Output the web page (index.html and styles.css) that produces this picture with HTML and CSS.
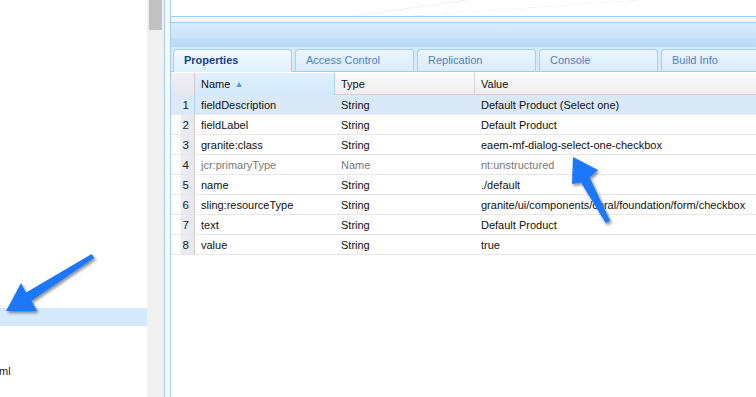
FILE: index.html
```html
<!DOCTYPE html>
<html>
<head>
<meta charset="utf-8">
<link rel="stylesheet" href="styles.css">
</head>
<body>
<div class="left">
  <div class="tree">
    <div class="tree-row selected"></div>
    <div class="tree-gap"></div>
    <div class="tree-row text">ml</div>
  </div>
</div>
<div class="scrollbar"><div class="thumb"></div></div>
<div class="splitter"></div>
<div class="main">
  <div class="topbox"></div>
  <div class="topgap"></div>
  <div class="panel-header"><div class="ph-top"></div><div class="ph-bottom"></div></div>
  <div class="tabstrip">
    <div class="tab active">Properties</div>
    <div class="tab">Access Control</div>
    <div class="tab">Replication</div>
    <div class="tab">Console</div>
    <div class="tab">Build Info</div>
  </div>
  <div class="grid">
    <div class="ghead">
      <div class="gh num"></div>
      <div class="gh name">Name <span class="sort">&#9650;</span></div>
      <div class="gh">Type</div>
      <div class="gh value">Value</div>
    </div>
    <div class="row sel"><div class="c num">1</div><div class="c">fieldDescription</div><div class="c">String</div><div class="c">Default Product (Select one)</div></div>
    <div class="row"><div class="c num">2</div><div class="c">fieldLabel</div><div class="c">String</div><div class="c">Default Product</div></div>
    <div class="row"><div class="c num">3</div><div class="c">granite:class</div><div class="c">String</div><div class="c">eaem-mf-dialog-select-one-checkbox</div></div>
    <div class="row dim"><div class="c num">4</div><div class="c">jcr:primaryType</div><div class="c">Name</div><div class="c">nt:unstructured</div></div>
    <div class="row"><div class="c num">5</div><div class="c">name</div><div class="c">String</div><div class="c">./default</div></div>
    <div class="row"><div class="c num">6</div><div class="c">sling:resourceType</div><div class="c">String</div><div class="c">granite/ui/components/coral/foundation/form/checkbox</div></div>
    <div class="row"><div class="c num">7</div><div class="c">text</div><div class="c">String</div><div class="c">Default Product</div></div>
    <div class="row"><div class="c num">8</div><div class="c">value</div><div class="c">String</div><div class="c">true</div></div>
  </div>
</div>
<svg class="arrows" width="756" height="397" viewBox="0 0 756 397">
  <defs>
    <filter id="sh" x="-20%" y="-20%" width="140%" height="140%">
      <feDropShadow dx="1.5" dy="2" stdDeviation="1.6" flood-color="#000" flood-opacity="0.45"/>
    </filter>
  </defs>
  <polygon filter="url(#sh)" fill="#1f77fb" points="6,311 21,283 26.1,292.4 91.7,253.9 94.3,258.1 31.5,300.8 37,311"/>
  <polygon filter="url(#sh)" fill="#1f77fb" points="573,157 572,184 581,182.5 605.8,223.2 610.2,220.8 589.7,177.5 598,170"/>
</svg>
</body>
</html>
```

FILE: styles.css
```css
html, body {
  margin: 0;
  padding: 0;
}
body {
  width: 756px;
  height: 397px;
  overflow: hidden;
  display: flex;
  position: relative;
  font-family: "Liberation Sans", Arial, sans-serif;
  font-size: 11px;
  color: #111;
  background: #fff;
}
.left {
  width: 147px;
  flex: none;
  background: #fff;
}
.tree {
  padding-top: 308px;
  display: flex;
  flex-direction: column;
}
.tree-row {
  height: 18px;
}
.tree-row.selected {
  background: #d5eafd;
}
.tree-gap {
  height: 36px;
}
.tree-row.text {
  line-height: 18px;
  color: #222;
  text-indent: -1px;
}
.scrollbar {
  width: 17px;
  flex: none;
  background: #f0f0f0;
  padding: 0 2px 0 2px;
  box-sizing: border-box;
}
.thumb {
  height: 30px;
  background: #c1c1c1;
}
.splitter {
  width: 6px;
  flex: none;
  box-sizing: border-box;
  border-left: 1px solid #9fcdf5;
  background: #f6f9fc;
}
.main {
  flex: 1;
  border-left: 1px solid #9fcdf5;
  display: flex;
  flex-direction: column;
  background: #fff;
}
.topbox {
  height: 16px;
  border-bottom: 1px solid #9fcdf5;
  background:
    linear-gradient(172deg, transparent 40%, rgba(200,200,200,0.25) 41%, transparent 42%),
    linear-gradient(176deg, transparent 55%, rgba(200,200,200,0.25) 56%, transparent 57%),
    #fff;
}
.topgap {
  height: 5px;
  background: #f3f7fb;
}
.panel-header {
  height: 24px;
  border-top: 1px solid #9fcdf5;
  display: flex;
  flex-direction: column;
}
.ph-top {
  height: 15px;
  background: linear-gradient(#d8ebfb, #cbe4f9);
}
.ph-bottom {
  flex: 1;
  background: linear-gradient(#c3dff7, #b9d9f4);
}
.tabstrip {
  height: 24px;
  background: #d6eafb;
  border-bottom: 1px solid #9fcdf5;
  display: flex;
  align-items: flex-end;
  gap: 3px;
  padding-left: 2px;
}
.tab {
  width: 119px;
  flex: none;
  box-sizing: border-box;
  border: 1px solid #a7d0f3;
  border-radius: 4px 4px 0 0;
  background: linear-gradient(#eaf5fe, #d9ecfc);
  color: #4e82c2;
  padding-left: 10px;
  line-height: 21px;
  font-size: 11px;
  margin-bottom: -1px;
  height: 23px;
  border-bottom: 1px solid #9fcdf5;
}
.tab.active {
  color: #15428b;
  font-weight: bold;
  background: linear-gradient(#f1f8fe, #dff0fd);
  border-bottom-color: #dff0fd;
}
.grid {
  display: flex;
  flex-direction: column;
}
.ghead {
  height: 23px;
  display: grid;
  grid-template-columns: 24px 140px 140px 1fr;
  background: linear-gradient(#fbfbfc, #ededf0);
  border-bottom: 1px solid #dccccc;
  box-sizing: border-box;
  border-top: 1px solid #fff;
}
.gh {
  padding-left: 6px;
  line-height: 22px;
  color: #111;
  border-right: 1px solid #d6d6d6;
  font-size: 11px;
}
.gh.num {
  padding: 0;
  background: linear-gradient(#eef0f4, #e5e8ee);
  border-right: 1px solid #d4c9c9;
}
.gh.name {
  background: linear-gradient(#e2f1fd, #d2e8fb);
  border-right: 1px solid #a9d2f6;
}
.gh.value {
  border-right: none;
}
.sort {
  font-size: 9px;
  color: #5a9ad8;
  vertical-align: 1px;
  margin-left: 1px;
}
.row {
  height: 20px;
  box-sizing: border-box;
  display: grid;
  grid-template-columns: 24px 140px 140px 1fr;
  border-bottom: 1px solid #ede6e6;
  background: #fff;
}
.row .c {
  padding-left: 6px;
  line-height: 20px;
  white-space: nowrap;
  overflow: hidden;
  font-size: 11px;
}
.row .c.num {
  padding: 0 5px 0 0;
  text-align: right;
  background: linear-gradient(to right, #fff 0, #fff 9px, #e9edf2 10px, #e6eaf0 100%);
  border-right: 1px solid #dccaca;
  color: #222;
  font-size: 11.5px;
}
.row.sel {
  background: #dae9f8;
}
.row.sel .c.num {
  background: #dce9f6;
  border-right-color: #a9d2f6;
}
.row.dim .c {
  color: #7a7a7a;
}
.row.dim .c.num {
  color: #222;
}
.arrows {
  position: absolute;
  left: 0;
  top: 0;
  pointer-events: none;
}
```
